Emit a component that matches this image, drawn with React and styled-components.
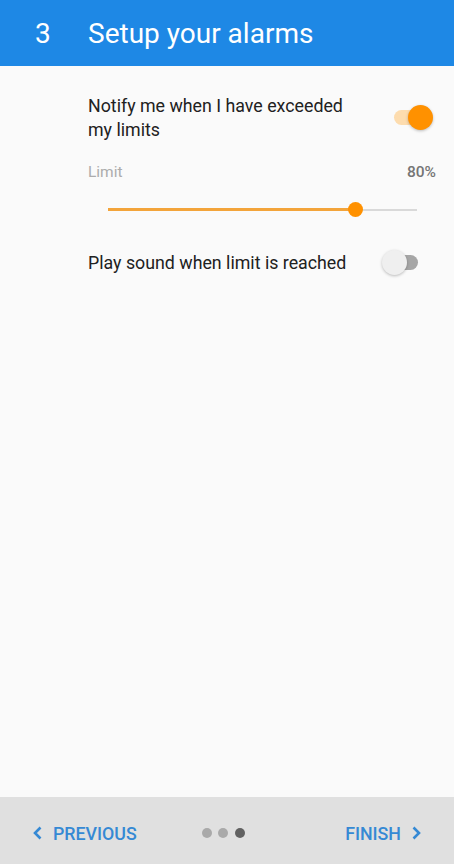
import React from "react";
import styled, { createGlobalStyle } from "styled-components";

const GlobalStyle = createGlobalStyle`
  html, body {
    margin: 0;
    padding: 0;
    background: #fafafa;
  }
  * {
    box-sizing: border-box;
  }
`;

const Screen = styled.div`
  width: 454px;
  height: 864px;
  display: flex;
  flex-direction: column;
  background: #fafafa;
  font-family: Roboto, "Noto Sans", sans-serif;
  color: #212121;
`;

const Header = styled.header`
  height: 66px;
  display: flex;
  align-items: center;
  padding-left: 35px;
  background: #1e88e5;
  color: #ffffff;
  font-size: 28px;
`;

const StepNumber = styled.span`
  width: 53px;
`;

const Title = styled.h1`
  margin: 0;
  font-size: 28px;
  font-weight: 400;
`;

const Content = styled.main`
  flex: 1;
  padding: 28px 22px 0 88px;
`;

const SettingRow = styled.div`
  display: flex;
  align-items: center;
  justify-content: space-between;
  padding-right: ${({ inset }) => inset || 0}px;
  margin-top: ${({ top }) => top || 0}px;
`;

const SettingText = styled.span`
  font-size: 17.8px;
  line-height: 24px;
  max-width: 280px;
`;

const SwitchFrame = styled.div`
  position: relative;
  width: 40px;
  height: 26px;
  flex-shrink: 0;
`;

const SwitchTrack = styled.div`
  position: absolute;
  left: 2px;
  right: 4px;
  top: 5px;
  height: 15px;
  border-radius: 8px;
  background: ${({ on }) => (on ? "#fddcae" : "#a6a6a6")};
`;

const SwitchThumb = styled.div`
  position: absolute;
  top: 0;
  left: ${({ on }) => (on ? "16px" : "0")};
  width: 25px;
  height: 25px;
  border-radius: 50%;
  background: ${({ on }) => (on ? "#ff9100" : "#efefef")};
  box-shadow: 0 1px 3px rgba(0, 0, 0, 0.25);
`;

const Switch = ({ on }) => (
  <SwitchFrame>
    <SwitchTrack on={on} />
    <SwitchThumb on={on} />
  </SwitchFrame>
);

const LimitRow = styled.div`
  display: flex;
  justify-content: space-between;
  margin-top: 20px;
  margin-right: -4px;
  font-size: 15.5px;
  line-height: 20px;
`;

const LimitLabel = styled.span`
  color: #acacac;
`;

const LimitValue = styled.span`
  color: #757575;
  font-weight: 500;
`;

const SliderFrame = styled.div`
  position: relative;
  height: 30px;
  margin: 13px 15px 0 20px;
`;

const SliderRail = styled.div`
  position: absolute;
  left: 0;
  right: 0;
  top: 14px;
  height: 2px;
  background: #d9d9d9;
`;

const SliderFill = styled.div`
  position: absolute;
  left: 0;
  top: 13px;
  height: 3px;
  background: #f3a43a;
`;

const SliderKnob = styled.div`
  position: absolute;
  top: 7px;
  width: 15px;
  height: 15px;
  margin-left: -7.5px;
  border-radius: 50%;
  background: #ff9100;
`;

const Slider = ({ value }) => (
  <SliderFrame>
    <SliderRail />
    <SliderFill style={{ width: `${value}%` }} />
    <SliderKnob style={{ left: `${value}%` }} />
  </SliderFrame>
);

const Footer = styled.footer`
  height: 67px;
  display: flex;
  align-items: center;
  justify-content: space-between;
  padding: 5px 32px 0;
  background: #e0e0e0;
`;

const NavButton = styled.button`
  display: flex;
  align-items: center;
  gap: 10px;
  padding: 0;
  border: none;
  background: none;
  font-family: Roboto, "Noto Sans", sans-serif;
  font-size: 17.8px;
  font-weight: 500;
  color: #3589d4;
  width: 110px;
  justify-content: ${({ right }) => (right ? "flex-end" : "flex-start")};
`;

const Dots = styled.div`
  display: flex;
  gap: 6.5px;
  margin-right: 8px;
`;

const Dot = styled.span`
  width: 10px;
  height: 10px;
  border-radius: 50%;
  background: ${({ active }) => (active ? "#616161" : "#a9a9a9")};
`;

const Chevron = ({ dir }) => (
  <svg width="11" height="14" viewBox="0 0 11 14">
    <path
      d={dir === "left" ? "M8.5 1.5 L3 7 L8.5 12.5" : "M2.5 1.5 L8 7 L2.5 12.5"}
      fill="none"
      stroke="#3589d4"
      strokeWidth="2.6"
    />
  </svg>
);

export default function App() {
  return (
    <>
      <GlobalStyle />
      <Screen>
        <Header>
          <StepNumber>3</StepNumber>
          <Title>Setup your alarms</Title>
        </Header>
        <Content>
          <SettingRow>
            <SettingText>Notify me when I have exceeded my limits</SettingText>
            <Switch on />
          </SettingRow>
          <LimitRow>
            <LimitLabel>Limit</LimitLabel>
            <LimitValue>80%</LimitValue>
          </LimitRow>
          <Slider value={80} />
          <SettingRow top={25} inset={10}>
            <SettingText>Play sound when limit is reached</SettingText>
            <Switch />
          </SettingRow>
        </Content>
        <Footer>
          <NavButton>
            <Chevron dir="left" />
            PREVIOUS
          </NavButton>
          <Dots>
            <Dot />
            <Dot />
            <Dot active />
          </Dots>
          <NavButton right>
            FINISH
            <Chevron dir="right" />
          </NavButton>
        </Footer>
      </Screen>
    </>
  );
}
